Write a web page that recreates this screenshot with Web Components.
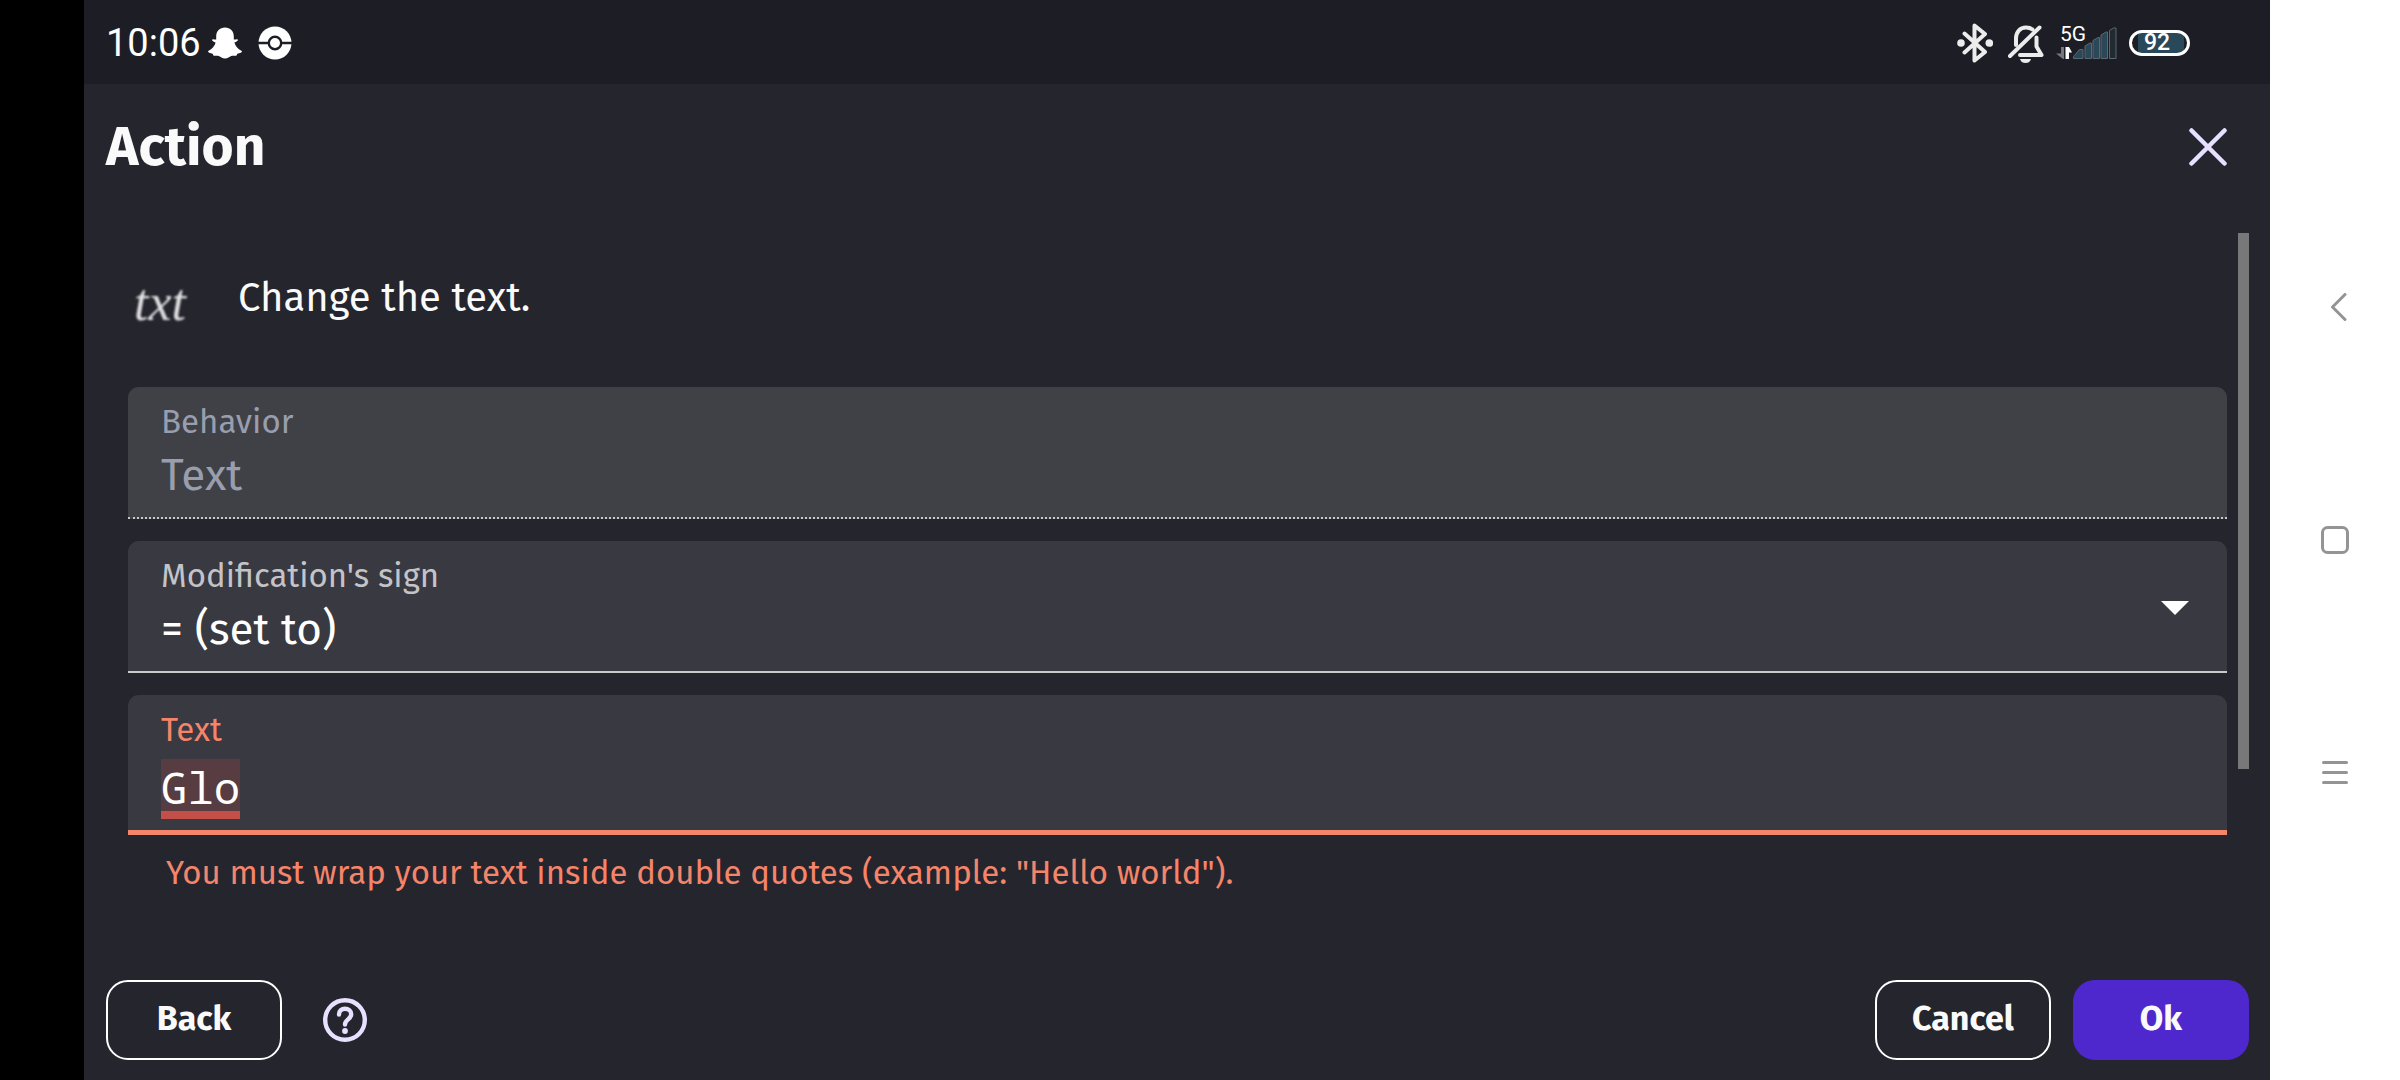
<!DOCTYPE html>
<html lang="en">
<head>
<meta charset="utf-8">
<title>Action</title>
<style>
  html, body { margin: 0; height: 100%; background: #000; }
  body { font-family: "Fira Sans", "Noto Sans", "Open Sans", sans-serif; color: #fafafa; }
</style>
</head>
<body>
<phone-screen>
  <status-bar slot="status" time="10:06" battery="92"></status-bar>
  <action-dialog slot="app" heading="Action">
    <action-intro>Change the text.</action-intro>
    <text-field label="Behavior" value="Text" disabled></text-field>
    <select-field label="Modification's sign" value="= (set to)"></select-field>
    <text-field label="Text" value="Glo" error='You must wrap your text inside double quotes (example: "Hello world").'></text-field>
    <app-button slot="start">Back</app-button>
    <help-button slot="start"></help-button>
    <app-button slot="end">Cancel</app-button>
    <app-button slot="end" primary>Ok</app-button>
  </action-dialog>
  <system-nav slot="nav"></system-nav>
</phone-screen>
<script>
class Base extends HTMLElement {
  connectedCallback() {
    if (this.shadowRoot) return;
    this.attachShadow({ mode: 'open' }).innerHTML =
      '<style>*{box-sizing:border-box}:host{box-sizing:border-box}button,input,select{font:inherit;color:inherit;margin:0;border:0;background:none;padding:0}svg,button{display:block}</style>' + this.render();
  }
  attr(name) {
    return (this.getAttribute(name) || '').replace(/&/g, '&amp;').replace(/"/g, '&quot;').replace(/</g, '&lt;');
  }
}

customElements.define('phone-screen', class extends Base {
  render() { return `
<style>
  :host { display: grid; grid-template-columns: 84px 1fr 130px; min-height: 100vh; background: #000; }
  .app { grid-column: 2; display: flex; flex-direction: column; background: #25252e; min-width: 0; }
  ::slotted([slot=app]) { flex: 1; }
</style>
<div class="app"><slot name="status"></slot><slot name="app"></slot></div>
<slot name="nav"></slot>`; }
});

customElements.define('status-bar', class extends Base {
  render() { return `
<style>
  :host { display: flex; align-items: center; justify-content: space-between; height: 84px; padding: 2px 80px 0 22px; background: #1d1d26; font-family: Roboto, sans-serif; color: #fff; }
  .side { display: flex; align-items: center; }
  .time { font-size: 38px; line-height: 44px; margin-right: 7px; }
  .ghost { margin-right: 16px; }
  .bt { margin-right: 15px; }
  .bell { margin-right: 12px; }
  .signal { margin-right: 11px; }
  .battery { display: flex; align-items: center; width: 61px; height: 26px; border: 3px solid #fff; border-radius: 13px; padding: 0 0 0 12px; font-size: 23px; line-height: 20px; font-weight: 500; background: linear-gradient(#29495a, #29495a) 6px 0 / 46px 100% no-repeat; }
</style>
<div class="side">
  <span class="time">${this.attr('time')}</span>
  <svg class="ghost" width="34" height="34" viewBox="0 0 34 34"><path fill="#fff" d="M17 1.500c5.300 0 8.800 3.800 8.800 8.700v3.200c1.500.4 3.300-.9 4 .3.500 1-1 2.200-3.400 2.900.9 3.500 3.400 6.700 7 8.200.8.400.6 1.200-.2 1.600-1.500.8-3 .9-3.800 1.400-.6.500-.3 1.700-1.200 1.900-1.400.3-3-.4-5 .3-1.900.9-3.300 2.400-6.200 2.400s-4.300-1.500-6.200-2.400c-2-.7-3.600 0-5-.3-.9-.2-.6-1.400-1.200-1.900-.8-.5-2.300-.6-3.800-1.400-.8-.4-1-1.200-.2-1.600 3.600-1.500 6.100-4.700 7-8.200C5.200 15.900 3.700 14.700 4.200 13.700c.7-1.200 2.500.1 4-.3v-3.200C8.200 5.300 11.700 1.500 17 1.500z"/></svg>
  <svg width="34" height="34" viewBox="0 0 34 34"><circle cx="17" cy="17" r="16.500" fill="#fff"/><path stroke="#1d1d26" stroke-width="2.400" d="M0 17h34"/><circle cx="17" cy="17" r="6.200" fill="#fff" stroke="#1d1d26" stroke-width="2.400"/></svg>
</div>
<div class="side">
  <svg class="bt" width="36" height="40" viewBox="0 0 36 40" fill="none" stroke="#ececec" stroke-width="4" stroke-linejoin="round" stroke-linecap="round"><path d="M7.500 10.500 28 29l-10.500 8.500v-35L28 11 7.500 29.500"/><circle cx="4" cy="20" r="3.800" fill="#ececec" stroke="none"/><circle cx="32.300" cy="20" r="3.800" fill="#ececec" stroke="none"/></svg>
  <svg class="bell" width="36" height="40" viewBox="0 0 36 40" fill="none" stroke="#ececec" stroke-width="4" stroke-linecap="round"><path d="M8 22V15.500C8 9 12 4.500 18 4.500c2.500 0 5 .8 6.500 2"/><path d="M28.500 14.500v9l5 8.500H12" stroke-linejoin="round"/><path d="M2 33 31.500 4.500"/><path d="M12 36h11c-1 3-3 4-5.500 4S13 39 12 36z" fill="#ececec" stroke="none"/></svg>
  <svg class="signal" width="62" height="52" viewBox="0 -8 62 52">
    <text x="4" y="16" font-size="21" fill="#fff" font-family="Roboto">5G</text>
    <path fill="#77777d" d="M8 22h-3v6.500H0L7 34h1z"/><path fill="#fff" d="M9.500 34h3.500v-6.500H16L13 22H9.500z"/>
    <g fill="#29495a" stroke="#5a686f" stroke-width="1"><path d="M17.500 33.500v-2l6-7h3.500v9zM29 33.500V21l5-3h1.500v15.500zM37 33.500V15.500l5-3h1.500v21zM45 33.500V10l5-3h1.500v26.500z"/><path fill="#1f2b30" d="M53.500 33.500V5.500l4-2.500h2.500v30.500z"/></g>
  </svg>
  <span class="battery">${this.attr('battery')}</span>
</div>`; }
});

customElements.define('system-nav', class extends Base {
  render() { return `
<style>
  :host { display: flex; flex-direction: column; align-items: center; justify-content: center; gap: 205px; background: #fff; }
  svg { fill: none; stroke: #949494; stroke-width: 3; stroke-linecap: round; stroke-linejoin: round; }
</style>
<button aria-label="Back"><svg width="28" height="28" viewBox="0 0 28 28"><path d="M24 1.500 11.500 14 24 26.500"/></svg></button>
<button aria-label="Home"><svg width="28" height="28" viewBox="0 0 28 28"><rect x="1.500" y="1.500" width="25" height="25" rx="5"/></svg></button>
<button aria-label="Recent apps"><svg width="28" height="28" viewBox="0 0 28 28"><path d="M2.500 3.500h23M2.500 13.500h23M2.500 23.500h23"/></svg></button>`; }
});

customElements.define('action-dialog', class extends Base {
  render() { return `
<style>
  :host { display: flex; flex-direction: column; }
  header { display: flex; align-items: center; justify-content: space-between; padding: 31px 43px 54px 22px; }
  h1 { margin: 0; font-size: 55px; line-height: 64px; font-weight: 700; }
  main { flex: 1; display: grid; grid-template-columns: 1fr 11px; gap: 11px; padding: 0 21px 0 22px; }
  .body { display: flex; flex-direction: column; gap: 22px; padding-left: 22px; }
  .thumb { height: 76%; background: #78787a; }
  footer { display: flex; align-items: center; justify-content: space-between; padding: 42px 21px 20px 22px; }
  .start { display: flex; align-items: center; gap: 41px; }
  .end { display: flex; align-items: center; gap: 22px; }
</style>
<header><h1>${this.attr('heading')}</h1>
<button aria-label="Close"><svg width="38" height="38" viewBox="0 0 38 38"><path d="M2.500 2.500l33 33M35.500 2.500l-33 33" stroke="#e8e0ff" stroke-width="4.500" stroke-linecap="round"/></svg></button></header>
<main><div class="body"><slot></slot></div><div class="rail"><div class="thumb"></div></div></main>
<footer><div class="start"><slot name="start"></slot></div><div class="end"><slot name="end"></slot></div></footer>`; }
});

customElements.define('action-intro', class extends Base {
  render() { return `
<style>
  :host { display: flex; height: 132px; padding-top: 40px; gap: 46px; }
  .icon { width: 64px; text-align: center; font: italic 52px/60px "Liberation Serif", serif; color: #e0e0e2; filter: blur(1px); }
  p { margin: 0; font-size: 40px; line-height: 50px; }
</style>
<span class="icon" aria-hidden="true">txt</span><p><slot></slot></p>`; }
});

const fieldCss = `
  :host { display: block; }
  .box { display: flex; flex-direction: column; padding: 16px 33px 13px; background: #393941; border-bottom: 2px solid #c9c9cc; border-radius: 11px 11px 0 0; }
  label { font-size: 33px; line-height: 38px; color: #c3c3c8; }
  input, select { display: block; width: 100%; height: 56px; margin-top: 7px; font-size: 44px; line-height: 56px; color: #fff; outline: none; appearance: none; opacity: 1; }`;

customElements.define('text-field', class extends Base {
  render() {
    const error = this.attr('error'), off = this.hasAttribute('disabled');
    return `
<style>${fieldCss}
  .off { background: #404146; border-bottom-style: dotted; }
  .off label, .off input { color: #999eae; }
  .bad { padding-bottom: 11px; border-bottom: 5px solid #f4846a; }
  .bad label, p { color: #f4846a; }
  .bad input { height: 60px; margin-top: 10px; padding-bottom: 4px; font-family: "Droid Sans Mono", "Noto Sans Mono", "Liberation Mono", monospace; font-size: 44px;
    background: linear-gradient(#573c41 0 52px, #c44f48 52px) 0 0 / 3ch 100% no-repeat; }
  p { margin: 19px 0 0; padding: 0 38px; font-size: 33px; line-height: 38px; }
</style>
<div class="box ${error ? 'bad' : ''} ${off ? 'off' : ''}"><label for="f">${this.attr('label')}</label>
<input id="f" type="text" value="${this.attr('value')}" ${off ? 'disabled' : ''}></div>
${error ? `<p>${error}</p>` : ''}`; }
});

customElements.define('select-field', class extends Base {
  render() { return `
<style>${fieldCss}
  .box { display: grid; grid-template-columns: 1fr 28px; column-gap: 20px; padding-right: 38px; }
  .text { display: flex; flex-direction: column; }
  svg { align-self: center; }
</style>
<div class="box"><div class="text"><label for="f">${this.attr('label')}</label>
<select id="f"><option>${this.attr('value')}</option></select></div>
<svg width="28" height="14" viewBox="0 0 28 14"><path d="M0 0h28L14 14z" fill="#fff"/></svg></div>`; }
});

customElements.define('app-button', class extends Base {
  render() { return `
<style>
  :host { display: block; }
  button { min-width: 176px; height: 80px; padding-bottom: 2px; border: 2px solid #fff; border-radius: 22px; font-size: 34px; line-height: 40px; font-weight: 700; color: #fafafa; }
  :host([primary]) button { background: #4f28cd; border-color: #4f28cd; }
</style><button><slot></slot></button>`; }
});

customElements.define('help-button', class extends Base {
  render() { return `
<style>:host { display: block; }</style>
<button aria-label="Help"><svg width="44" height="44" viewBox="0 0 44 44" fill="none" stroke="#e8e0ff" stroke-linecap="round" stroke-linejoin="round"><circle cx="22" cy="22" r="19.800" stroke-width="4.400"/><path stroke-width="4.400" d="M16 16.500c0-3.700 2.700-5.800 6-5.800s6.200 2.200 6.200 5.500c0 5-6.200 5.300-6.200 10.300"/><circle cx="22" cy="33" r="2.900" fill="#e8e0ff" stroke="none"/></svg></button>`; }
});
</script>
</body>
</html>
